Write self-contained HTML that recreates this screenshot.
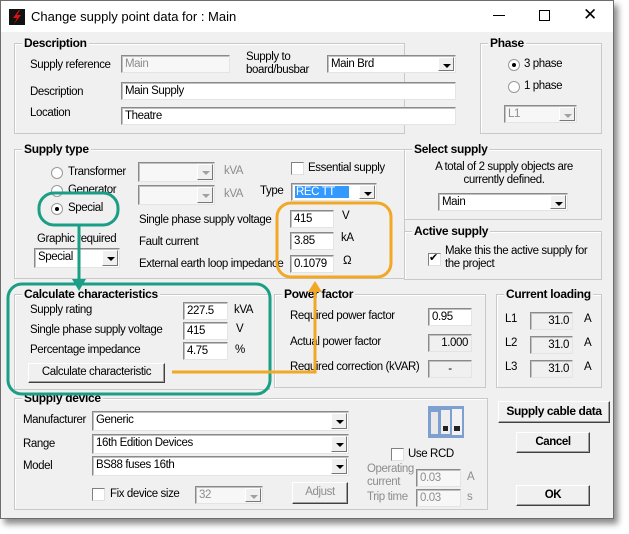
<!DOCTYPE html>
<html><head><meta charset="utf-8"><style>
*{box-sizing:border-box}
body{margin:0;width:629px;height:534px;background:#fff;font-family:"Liberation Sans",sans-serif;font-size:11.5px;letter-spacing:-0.4px;color:#000;position:relative;overflow:hidden}
.win{position:absolute;left:0;top:0;width:614px;height:519px;background:#f0f0f0;border:1px solid #6d6d6d;box-shadow:4px 5px 6px rgba(0,0,0,.45)}
.tb{position:absolute;left:0;top:0;width:612px;height:31px;background:#fff;letter-spacing:0}
.a{position:absolute;white-space:nowrap}
.g{position:absolute;border:1px solid #c9c9c9;box-shadow:inset 1px 1px 0 #fff}
.gt{position:absolute;top:-8px;left:7px;background:#f0f0f0;padding:0 2px;font-weight:bold;font-size:12px;letter-spacing:-0.3px;white-space:nowrap}
.in{position:absolute;background:#fff;border:1px solid;border-color:#8a8a8a #e4e4e4 #e4e4e4 #8a8a8a;box-shadow:inset 1px 1px 0 #c0c0c0;padding:1px 3px;height:18px;line-height:14px;white-space:nowrap;overflow:hidden}
.dis{color:#8d8d8d;background:#f7f7f7}
.ro{background:#f0f0f0;text-align:right}
.dd{position:absolute;right:1px;top:1px;bottom:1px;width:16px;background:#f0f0f0;border:1px solid;border-color:#fff #777 #777 #fff}
.dd:after{content:"";position:absolute;left:4px;top:6px;border:4px solid transparent;border-top:4px solid #000;border-bottom:0}
.dd.x:after{border-top-color:#a0a0a0}
.rb{position:absolute;width:12px;height:12px;border-radius:50%;background:#fff;border:1px solid #999}
.rb.on:after{content:"";position:absolute;left:3px;top:3px;width:4px;height:4px;border-radius:50%;background:#000}
.cb{position:absolute;width:13px;height:13px;background:#fff;border:1px solid;border-color:#808080 #e0e0e0 #e0e0e0 #808080}
.btn{position:absolute;background:#f0f0f0;border:1px solid;border-color:#fff #404040 #404040 #fff;box-shadow:inset -1px -1px 0 #a0a0a0;text-align:center}
</style></head><body>
<div class="win">
<div class="tb">
<svg class="a" style="left:8px;top:8px" width="16" height="16"><rect width="16" height="16" fill="#111"/><path d="M10 1 L4 9 H8 L5 15 L12 6 H8 L11 1Z" fill="#e01010"/></svg>
<div class="a" style="left:30px;top:8px;font-size:13px">Change supply point data for : Main</div>
<div class="a" style="left:492px;top:14px;width:12px;height:1px;background:#000"></div>
<div class="a" style="left:538px;top:9px;width:11px;height:11px;border:1px solid #000"></div>
<div class="a" style="left:582px;top:4px;font-size:17px">✕</div>
</div>

<div class="g" style="left:13px;top:42px;width:391px;height:91px"><div class="gt">Description</div></div>
<div class="a" style="left:29px;top:58px">Supply reference</div>
<div class="in dis" style="left:120px;top:54px;width:109px">Main</div>
<div class="a" style="left:245px;top:50px;line-height:13px">Supply to<br>board/busbar</div>
<div class="in" style="left:326px;top:54px;width:129px">Main Brd<div class="dd"></div></div>
<div class="a" style="left:29px;top:85px">Description</div>
<div class="in" style="left:120px;top:81px;width:335px">Main Supply</div>
<div class="a" style="left:29px;top:106px">Location</div>
<div class="in" style="left:120px;top:106px;width:335px">Theatre</div>

<div class="g" style="left:479px;top:42px;width:122px;height:91px"><div class="gt">Phase</div></div>
<div class="rb on" style="left:507px;top:58px"></div><div class="a" style="left:523px;top:57px">3 phase</div>
<div class="rb" style="left:507px;top:80px"></div><div class="a" style="left:523px;top:79px">1 phase</div>
<div class="in dis" style="left:503px;top:104px;width:73px">L1<div class="dd x"></div></div>

<div class="g" style="left:13px;top:148px;width:391px;height:130px"><div class="gt">Supply type</div></div>
<div class="rb" style="left:50px;top:166px"></div><div class="a" style="left:67px;top:165px">Transformer</div>
<div class="rb" style="left:50px;top:184px"></div><div class="a" style="left:67px;top:183px">Generator</div>
<div class="rb on" style="left:50px;top:202px"></div><div class="a" style="left:67px;top:201px">Special</div>
<div class="in dis" style="left:137px;top:161px;width:77px;height:20px"><div class="dd x"></div></div>
<div class="in dis" style="left:137px;top:184px;width:77px;height:20px"><div class="dd x"></div></div>
<div class="a" style="left:223px;top:164px;color:#8d8d8d">kVA</div>
<div class="a" style="left:223px;top:187px;color:#8d8d8d">kVA</div>
<div class="cb" style="left:290px;top:161px"></div><div class="a" style="left:307px;top:161px">Essential supply</div>
<div class="a" style="left:259px;top:184px">Type</div>
<div class="in" style="left:290px;top:182px;width:86px"><span style="background:#3399ff;color:#fff;padding:0 14px 0 1px">REC TT</span><div class="dd"></div></div>
<div class="a" style="left:138px;top:213px">Single phase supply voltage</div>
<div class="in" style="left:289px;top:209px;width:44px">415</div><div class="a" style="left:341px;top:209px">V</div>
<div class="a" style="left:138px;top:235px">Fault current</div>
<div class="in" style="left:289px;top:231px;width:44px">3.85</div><div class="a" style="left:340px;top:231px">kA</div>
<div class="a" style="left:138px;top:257px">External earth loop impedance</div>
<div class="in" style="left:289px;top:254px;width:44px">0.1079</div><div class="a" style="left:342px;top:254px">Ω</div>
<div class="a" style="left:36px;top:232px">Graphic required</div>
<div class="in" style="left:33px;top:247px;width:86px;height:20px">Special<div class="dd"></div></div>

<div class="g" style="left:403px;top:148px;width:198px;height:71px"><div class="gt">Select supply</div></div>
<div class="a" style="left:404px;top:160px;width:198px;text-align:center;line-height:13px;white-space:normal">A total of 2 supply objects are<br>currently defined.</div>
<div class="in" style="left:437px;top:192px;width:130px">Main<div class="dd"></div></div>
<div class="g" style="left:403px;top:230px;width:198px;height:49px"><div class="gt">Active supply</div></div>
<div class="cb" style="left:427px;top:252px"></div><div class="a" style="left:428px;top:250px;font-size:11px">✔</div>
<div class="a" style="left:444px;top:244px;line-height:13px">Make this the active supply for<br>the project</div>

<div class="g" style="left:13px;top:293px;width:256px;height:96px"><div class="gt">Calculate characteristics</div></div>
<div class="a" style="left:29px;top:303px">Supply rating</div>
<div class="in" style="left:182px;top:301px;width:45px">227.5</div><div class="a" style="left:233px;top:303px">kVA</div>
<div class="a" style="left:29px;top:323px">Single phase supply voltage</div>
<div class="in" style="left:182px;top:321px;width:45px">415</div><div class="a" style="left:235px;top:322px">V</div>
<div class="a" style="left:29px;top:343px">Percentage impedance</div>
<div class="in" style="left:182px;top:341px;width:45px">4.75</div><div class="a" style="left:234px;top:343px">%</div>
<div class="btn" style="left:27px;top:362px;width:137px;height:20px;line-height:17px">Calculate characteristic</div>

<div class="g" style="left:273px;top:293px;width:212px;height:94px"><div class="gt">Power factor</div></div>
<div class="a" style="left:289px;top:309px">Required power factor</div>
<div class="in" style="left:427px;top:307px;width:44px">0.95</div>
<div class="a" style="left:289px;top:335px">Actual power factor</div>
<div class="in ro" style="left:427px;top:333px;width:44px">1.000</div>
<div class="a" style="left:289px;top:360px">Required correction (kVAR)</div>
<div class="in ro" style="left:427px;top:359px;width:44px;text-align:center">-</div>

<div class="g" style="left:495px;top:293px;width:106px;height:94px"><div class="gt">Current loading</div></div>
<div class="a" style="left:504px;top:312px">L1</div><div class="in ro" style="left:529px;top:311px;width:43px">31.0 </div><div class="a" style="left:583px;top:312px">A</div>
<div class="a" style="left:504px;top:336px">L2</div><div class="in ro" style="left:529px;top:335px;width:43px">31.0 </div><div class="a" style="left:583px;top:336px">A</div>
<div class="a" style="left:504px;top:360px">L3</div><div class="in ro" style="left:529px;top:359px;width:43px">31.0 </div><div class="a" style="left:583px;top:360px">A</div>

<div class="g" style="left:13px;top:397px;width:474px;height:112px"><div class="gt">Supply device</div></div>
<div class="a" style="left:22px;top:413px">Manufacturer</div>
<div class="in" style="left:91px;top:410px;width:257px;height:20px">Generic<div class="dd"></div></div>
<div class="a" style="left:22px;top:437px">Range</div>
<div class="in" style="left:91px;top:433px;width:257px;height:20px">16th Edition Devices<div class="dd"></div></div>
<div class="a" style="left:22px;top:459px">Model</div>
<div class="in" style="left:91px;top:455px;width:257px;height:20px">BS88 fuses 16th<div class="dd"></div></div>
<div class="cb" style="left:91px;top:487px"></div><div class="a" style="left:109px;top:487px">Fix device size</div>
<div class="in dis" style="left:194px;top:485px;width:68px">32<div class="dd x"></div></div>
<div class="btn" style="left:291px;top:481px;width:56px;height:22px;line-height:19px;color:#8d8d8d">Adjust</div>
<svg class="a" style="left:427px;top:405px" width="36" height="32"><rect width="36" height="32" fill="#7ea0d0"/><rect x="3" y="6" width="7" height="22" fill="#e8e8e8"/><rect x="13" y="4" width="9" height="24" fill="#eee"/><rect x="24" y="3" width="10" height="26" fill="#f2f2f2"/><rect x="15" y="20" width="5" height="5" fill="#222"/><rect x="26" y="20" width="6" height="5" fill="#222"/></svg>
<div class="cb" style="left:390px;top:447px"></div><div class="a" style="left:407px;top:447px">Use RCD</div>
<div class="a" style="left:366px;top:462px;line-height:13px;color:#8d8d8d">Operating<br>current</div>
<div class="in dis" style="left:415px;top:468px;width:45px">0.03</div><div class="a" style="left:466px;top:470px;color:#8d8d8d">A</div>
<div class="a" style="left:366px;top:490px;color:#8d8d8d">Trip time</div>
<div class="in dis" style="left:415px;top:488px;width:45px">0.03</div><div class="a" style="left:466px;top:490px;color:#8d8d8d">s</div>

<div class="btn" style="left:497px;top:400px;width:112px;height:22px;line-height:19px;font-weight:bold;font-size:12px">Supply cable data</div>
<div class="btn" style="left:515px;top:431px;width:74px;height:21px;line-height:18px;font-weight:bold">Cancel</div>
<div class="btn" style="left:515px;top:484px;width:74px;height:21px;line-height:18px;font-weight:bold">OK</div>
</div>

<svg class="a" style="left:0;top:0" width="629" height="534">
<g fill="none" stroke="#1a9e86" stroke-width="3">
<rect x="39" y="193" width="79" height="32" rx="15"/>
<rect x="8" y="284" width="262" height="110" rx="14"/>
<line x1="79" y1="225" x2="79" y2="282"/>
</g>
<path d="M72 279 L86 279 L79 291Z" fill="#1a9e86"/>
<g fill="none" stroke="#f0a826" stroke-width="3">
<rect x="277" y="203" width="114" height="74" rx="14"/>
<path d="M172 372 H315 V290"/>
</g>
<path d="M308 292 L322 292 L315 281Z" fill="#f0a826"/>
</svg>
</body></html>
